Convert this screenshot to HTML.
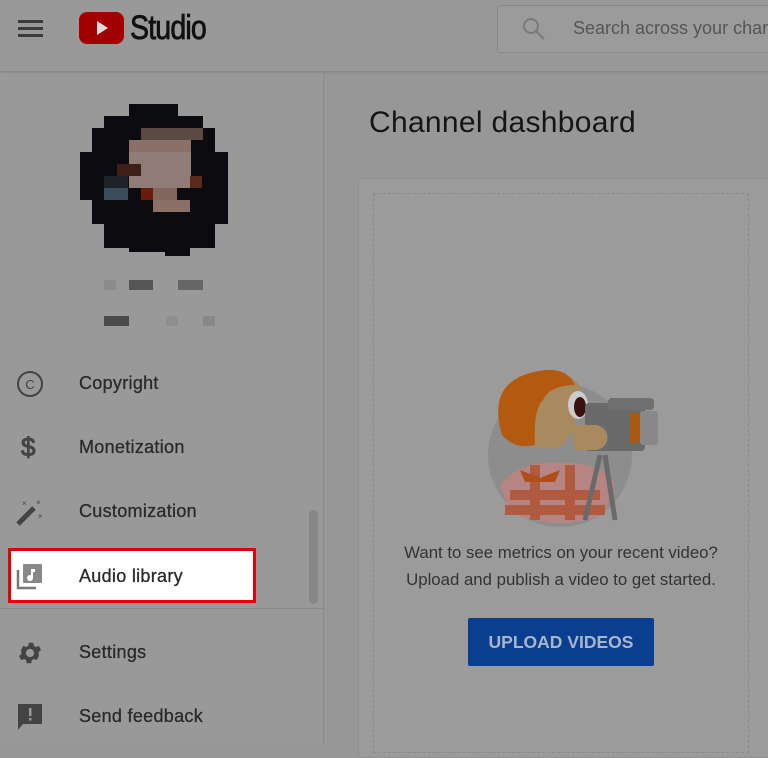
<!DOCTYPE html>
<html><head><meta charset="utf-8"><style>
*{margin:0;padding:0;box-sizing:border-box}
body{width:768px;height:743px;overflow:hidden;background:#979797;font-family:"Liberation Sans",sans-serif;position:relative}
.hdr{position:absolute;left:0;top:0;width:768px;height:72px;background:#999;border-bottom:1px solid #8a8a8a;box-shadow:0 1px 3px rgba(0,0,0,.1)}
.side{position:absolute;left:0;top:73px;width:324px;height:670px;background:#999;border-right:1px solid #8b8b8b}
.nav{position:absolute;left:79px;font-size:18px;color:#2a2a2a;letter-spacing:.3px;-webkit-text-stroke:.3px #2a2a2a}
.ic{position:absolute;left:16px}
</style></head><body>
<div class="hdr">
 <div style="position:absolute;left:18px;top:20px;width:25px;height:3px;background:#3b3b3b;box-shadow:0 7px 0 #3b3b3b,0 14px 0 #3b3b3b"></div>
 <div style="position:absolute;left:79px;top:12px;width:45px;height:32px;background:#a30000;border-radius:8px"></div>
 <div style="position:absolute;left:97px;top:21px;width:0;height:0;border-left:11px solid #ddd;border-top:7px solid transparent;border-bottom:7px solid transparent"></div>
 <div style="position:absolute;left:130px;top:9px;font-size:34px;color:#111;transform:scaleX(.84);transform-origin:left;letter-spacing:-1px;-webkit-text-stroke:.8px #111">Studio</div>
 <div style="position:absolute;left:497px;top:5px;width:290px;height:48px;border:1px solid #888;border-radius:3px;background:#9b9b9b"></div>
 <svg style="position:absolute;left:521px;top:16px" width="26" height="26" viewBox="0 0 26 26"><circle cx="10" cy="10" r="7" fill="none" stroke="#7a7a7a" stroke-width="2"/><path d="M15 15l8 8" stroke="#7a7a7a" stroke-width="2.2"/></svg>
 <div style="position:absolute;left:573px;top:18px;font-size:18px;color:#555;white-space:nowrap">Search across your chan</div>
</div>
<div class="side">
 <svg style="position:absolute;left:80px;top:31px" width="148" height="152" viewBox="0 0 148 152">
  <path d="M49 0h49v12h25v12h12v24h13v72h-13v24h-25v12h-25v-8H49v-4H24v-24H12V96H0V48h12V24h12V12h25z" fill="#0c0c10"/>
  <rect x="61" y="24" width="62" height="12" fill="#5a4a44"/>
  <rect x="49" y="36" width="62" height="12" fill="#8a7068"/>
  <rect x="49" y="48" width="62" height="36" fill="#907c76"/>
  <rect x="37" y="60" width="24" height="12" fill="#3e2018"/>
  <rect x="24" y="72" width="24" height="24" fill="#1c2226"/>
  <rect x="24" y="84" width="24" height="12" fill="#3a4c5a"/>
  <rect x="61" y="84" width="12" height="12" fill="#6a1c0c"/>
  <rect x="73" y="84" width="24" height="12" fill="#80665c"/>
  <rect x="73" y="96" width="37" height="12" fill="#8a7068"/>
  <rect x="110" y="72" width="12" height="12" fill="#5a2a1c"/>
 </svg>
 <div style="position:absolute;left:104px;top:207px;width:12px;height:10px;background:#8c8c8c"></div>
 <div style="position:absolute;left:129px;top:207px;width:24px;height:10px;background:#555"></div>
 <div style="position:absolute;left:178px;top:207px;width:25px;height:10px;background:#666"></div>
 <div style="position:absolute;left:104px;top:243px;width:25px;height:10px;background:#4a4a4a"></div>
 <div style="position:absolute;left:166px;top:243px;width:12px;height:10px;background:#8f8f8f"></div>
 <div style="position:absolute;left:203px;top:243px;width:12px;height:10px;background:#888"></div>
 <div style="position:absolute;left:309px;top:437px;width:9px;height:94px;background:#878787;border-radius:5px"></div>
 <div style="position:absolute;left:0;top:535px;width:324px;height:1px;background:#8a8a8a"></div>
</div>
<svg class="ic" style="top:370px" width="28" height="28" viewBox="0 0 28 28"><circle cx="14" cy="14" r="12" fill="none" stroke="#444" stroke-width="2"/><text x="14" y="19" font-size="13" text-anchor="middle" fill="#444" font-family="Liberation Sans">C</text></svg>
<div class="nav" style="top:373px">Copyright</div>
<div class="ic" style="top:432px;left:21px;font-size:26px;color:#444;-webkit-text-stroke:1px #444">$</div>
<div class="nav" style="top:437px">Monetization</div>
<svg class="ic" style="top:497px" width="30" height="30" viewBox="0 0 30 30"><path d="M2 27L18 11" stroke="#444" stroke-width="5"/><text x="6" y="9" font-size="8" fill="#444">×</text><text x="20" y="8" font-size="8" fill="#444">×</text><text x="22" y="22" font-size="8" fill="#444">×</text></svg>
<div class="nav" style="top:501px">Customization</div>
<div style="position:absolute;left:8px;top:548px;width:248px;height:55px;background:#fff;border:3px solid #e00000"></div>
<svg class="ic" style="top:562px" width="28" height="28" viewBox="0 0 28 28"><path d="M2 8v18h18" fill="none" stroke="#777" stroke-width="2.5"/><rect x="7" y="2" width="19" height="19" rx="1" fill="#888"/><path d="M15 7h4v3h-2v6a3 3 0 1 1-2-2.8z" fill="#fff"/></svg>
<div class="nav" style="top:566px">Audio library</div>
<svg class="ic" style="top:639px" width="28" height="28" viewBox="0 0 24 24"><path fill="#444" d="M19.4 13a7.5 7.5 0 000-2l2.1-1.6-2-3.5-2.5 1a7 7 0 00-1.7-1l-.4-2.7h-4l-.4 2.7a7 7 0 00-1.7 1l-2.5-1-2 3.5L4.6 11a7.5 7.5 0 000 2l-2.1 1.6 2 3.5 2.5-1a7 7 0 001.7 1l.4 2.7h4l.4-2.7a7 7 0 001.7-1l2.5 1 2-3.5zM12 15.5a3.5 3.5 0 110-7 3.5 3.5 0 010 7z"/></svg>
<div class="nav" style="top:642px">Settings</div>
<svg class="ic" style="top:702px" width="28" height="30" viewBox="0 0 28 30"><path d="M2 2h24v20H7l-5 6z" fill="#444"/><rect x="13" y="6" width="2.5" height="8" fill="#999"/><rect x="13" y="16" width="2.5" height="2.5" fill="#999"/></svg>
<div class="nav" style="top:706px">Send feedback</div>
<div style="position:absolute;left:369px;top:106px;font-size:30px;color:#151515;letter-spacing:.3px">Channel dashboard</div>
<div style="position:absolute;left:358px;top:178px;width:420px;height:580px;background:#9b9b9b;border:1px solid #8f8f8f;border-radius:3px"></div>
<div style="position:absolute;left:373px;top:193px;width:376px;height:560px;border:1px dashed #8a8a8a"></div>
<svg style="position:absolute;left:480px;top:365px" width="185" height="165" viewBox="0 0 185 165">
 <circle cx="80" cy="90" r="72" fill="#8d8d8d"/>
 <path d="M20 120q20-25 60-22q40 -2 55 20l-10 30q-40 20-95 0z" fill="#b48582"/>
 <path d="M30 130h90M25 145h100M55 100v55M90 100v55" stroke="#b05030" stroke-width="10" opacity=".8"/>
 <path d="M40 105l20 8 20-8-5 12h-30z" fill="#b04e18"/>
 <path d="M35 30q20-25 55-18q15 8 10 25q-5 30-20 45q-20 5-35-5q-18-20-10-47z" fill="#a88a5e"/>
 <path d="M22 70q-15-50 28-62q35-10 45 12q-25 0-32 15q-10 10-8 45q-20 5-33-10z" fill="#b45a10"/>
 <ellipse cx="98" cy="40" rx="10" ry="14" fill="#ccc"/><ellipse cx="100" cy="42" rx="6" ry="10" fill="#3a1010"/>
 <rect x="105" y="38" width="60" height="48" rx="4" fill="#6a6a6a"/>
 <rect x="128" y="33" width="46" height="12" rx="4" fill="#6f6f6f"/>
 <rect x="150" y="48" width="20" height="30" fill="#a85a10"/><rect x="160" y="46" width="18" height="34" rx="3" fill="#888"/>
 <path d="M90 60h25a8 8 0 010 25H95z" fill="#a88a5e"/>
 <path d="M120 90l-15 65M125 90l10 65" stroke="#6a6a6a" stroke-width="5"/>
</svg>
<div style="position:absolute;left:363px;top:539px;width:396px;text-align:center;font-size:16.8px;line-height:27px;color:#333">Want to see metrics on your recent video?<br>Upload and publish a video to get started.</div>
<div style="position:absolute;left:468px;top:618px;width:186px;height:48px;background:#0a3f90;border-radius:2px;color:#a9b6c9;font-size:17.5px;font-weight:bold;text-align:center;line-height:48px">UPLOAD VIDEOS</div>
</body></html>
